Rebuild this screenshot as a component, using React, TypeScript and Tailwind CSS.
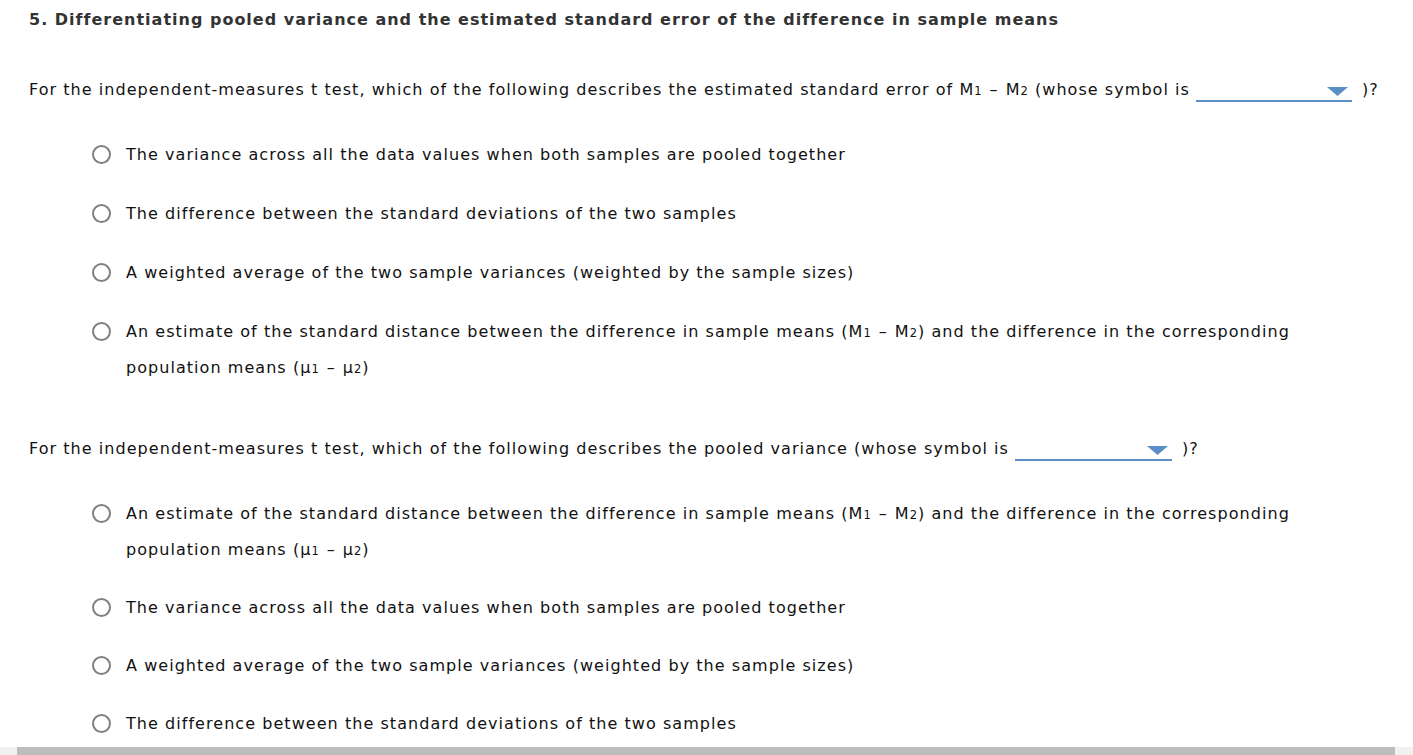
import React from 'react';

const font = { fontFamily: '"DejaVu Sans", Verdana, sans-serif' };

const Sub = ({ children }: { children: React.ReactNode }) => (
  <span className="text-[11.5px] leading-none tracking-[1px]">{children}</span>
);

const Radio = () => (
  <span className="w-[19px] h-[19px] rounded-full border-2 border-[#808080] bg-white shrink-0 mt-[8px]" />
);

const Option = ({ children }: { children: React.ReactNode }) => (
  <label className="flex items-start gap-[15px] pl-[92px]">
    <Radio />
    <span className="leading-[36px]">{children}</span>
  </label>
);

const Dropdown = ({ width }: { width: string }) => (
  <span className={`inline-flex items-start justify-end ${width} h-[22px] border-b-2 border-[#5b8ec4] align-[-1px] ml-[6px] mr-[10px] pr-[4px] tracking-normal`}>
    <svg width="21" height="9" viewBox="0 0 21 9" className="mt-[7px]">
      <path d="M0 0 L21 0 L10.5 9 Z" fill="#5b8ec4" />
    </svg>
  </span>
);

const Minus = () => <span className="mx-[7px]">–</span>;

const Means = () => (
  <>
    (M<Sub>1</Sub>
    <Minus />M<Sub>2</Sub>)
  </>
);

const Pops = () => (
  <>
    (μ<Sub>1</Sub>
    <Minus />μ<Sub>2</Sub>)
  </>
);

const estimate = (
  <>
    An estimate of the standard distance between the difference in sample means <Means /> and the difference in the corresponding
    <br />
    population means <Pops />
  </>
);

export default function App() {
  return (
    <div className="w-[1413px] h-[755px] bg-white flex flex-col overflow-hidden text-[16px] text-[#111] tracking-[1.05px]" style={font}>
      <div className="flex-1 pl-[29px]">
        <h1 className="font-bold text-[#333] text-[16px] leading-[20px] pt-[10px] tracking-[1px]">
          5. Differentiating pooled variance and the estimated standard error of the difference in sample means
        </h1>

        <p className="mt-[49px] leading-[22px] whitespace-nowrap">
          For the independent-measures t test, which of the following describes the estimated standard error of M<Sub>1</Sub>
          <Minus />M<Sub>2</Sub> (whose symbol is
          <Dropdown width="w-[156px]" />)?
        </p>

        <div className="mt-[35px] -ml-[29px] flex flex-col gap-[23px]">
          <Option>The variance across all the data values when both samples are pooled together</Option>
          <Option>The difference between the standard deviations of the two samples</Option>
          <Option>A weighted average of the two sample variances (weighted by the sample sizes)</Option>
          <Option>{estimate}</Option>
        </div>

        <p className="mt-[52px] leading-[22px] whitespace-nowrap">
          For the independent-measures t test, which of the following describes the pooled variance (whose symbol is
          <Dropdown width="w-[157px]" />)?
        </p>

        <div className="mt-[35px] -ml-[29px] flex flex-col gap-[22px]">
          <Option>{estimate}</Option>
          <Option>The variance across all the data values when both samples are pooled together</Option>
          <Option>A weighted average of the two sample variances (weighted by the sample sizes)</Option>
          <Option>The difference between the standard deviations of the two samples</Option>
        </div>
      </div>

      <div className="h-[8px] flex shrink-0 bg-[#f1f1f1]">
        <div className="w-[17px]" />
        <div className="w-[1378px] bg-[#bdbdbd]" />
      </div>
    </div>
  );
}
